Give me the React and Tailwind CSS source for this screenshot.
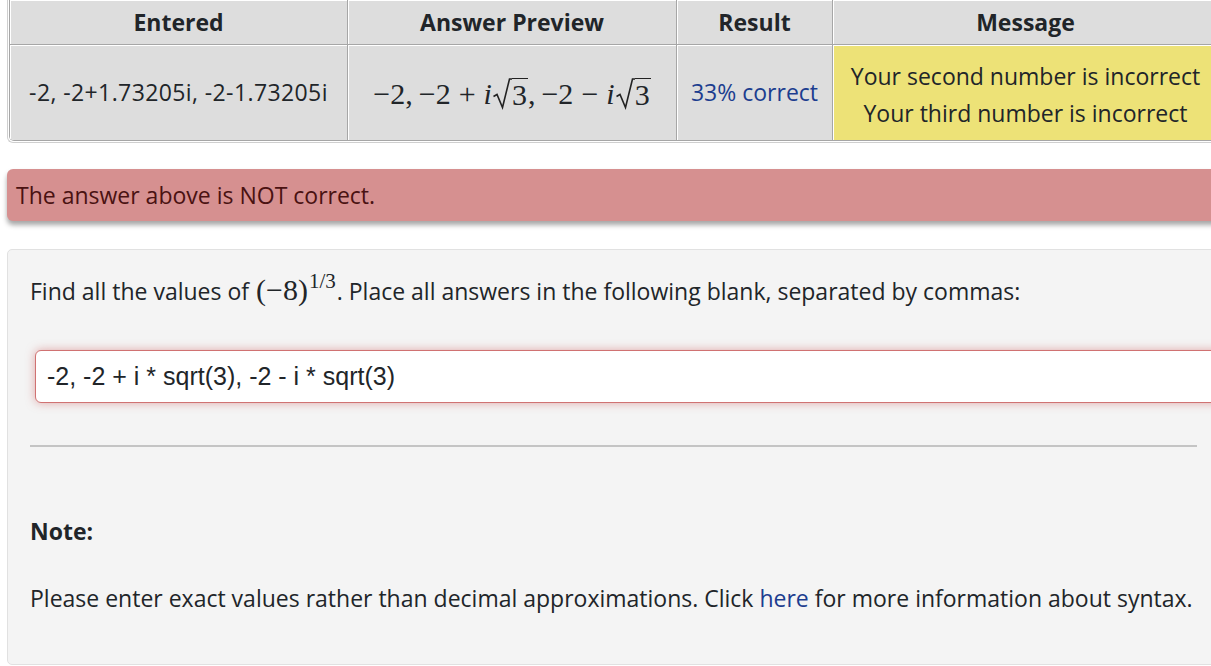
import React from "react";

const sans = { fontFamily: '"Open Sans", "Noto Sans", sans-serif' };
const mathFont = { fontFamily: '"Liberation Serif", "DejaVu Serif", serif' };

function Sqrt3() {
  return (
    <span className="inline-flex items-start">
      <svg width="20" height="32" viewBox="0 0 20 32">
        <path d="M1.5 18.5 L5 16.5 L10.5 29.5 L17.5 1 L20 1" fill="none" stroke="#222" strokeWidth="1.6" strokeLinejoin="miter" />
      </svg>
      <span className="border-t-[1.6px] border-[#222] leading-[29px] h-[32px] pt-[1px] pr-[1px]">3</span>
    </span>
  );
}

export default function App() {
  const cell = "border-l border-t border-[#a6a6a6] shadow-[inset_1px_1px_0_#ffffff] bg-[#dddddd] flex items-center justify-center";
  return (
    <div className="w-[1211px] h-[666px] overflow-hidden bg-white text-[#212529]" style={sans}>
      <div className="w-[1240px]">
        {/* table */}
        <div className="ml-[7px] w-[1211px] border-l border-b border-[#cfcfcf] rounded-bl-[6px] pl-[1px] pb-[1px] bg-white">
          <div className="border-b border-[#a6a6a6] rounded-bl-[5px] overflow-hidden">
            <div className="flex h-[44px] text-[23px] font-bold">
              <div className={`${cell} w-[338px] border-t-0`}>Entered</div>
              <div className={`${cell} w-[329px] border-t-0`}>Answer Preview</div>
              <div className={`${cell} w-[156px] border-t-0`}>Result</div>
              <div className={`${cell} flex-1 border-t-0`}>Message</div>
            </div>
            <div className="flex h-[96px] text-[23px]">
              <div className={`${cell} w-[338px] tracking-[0.4px]`}>-2, -2+1.73205i, -2-1.73205i</div>
              <div className={`${cell} w-[329px] text-[30px]`} style={mathFont}>
                <span className="flex items-center whitespace-nowrap leading-[32px] pt-[2px]">
                  <span>−2,</span>
                  <span className="inline-block w-[6px]" />
                  <span>−2</span>
                  <span className="inline-block mx-[8px]">+</span>
                  <span className="italic">i</span>
                  <Sqrt3 />
                  <span>,</span>
                  <span className="inline-block w-[6px]" />
                  <span>−2</span>
                  <span className="inline-block mx-[8px]">−</span>
                  <span className="italic">i</span>
                  <Sqrt3 />
                </span>
              </div>
              <div className={`${cell} w-[156px] text-[#1c3d8f]`}>33% correct</div>
              <div className={`${cell} flex-1 !bg-[#ede277] flex-col leading-[37px] pt-[4px]`}>
                <div>Your second number is incorrect</div>
                <div>Your third number is incorrect</div>
              </div>
            </div>
          </div>
        </div>

        {/* alert */}
        <div className="ml-[7px] mt-[26px] h-[52px] rounded-[6px] bg-[#d69090] text-[#4a1212] text-[23px] flex items-center pl-[9px] shadow-[0_4px_5px_rgba(0,0,0,0.35)]">
          The answer above is NOT correct.
        </div>

        {/* problem card */}
        <div className="ml-[7px] mt-[28px] w-[1213px] h-[416px] bg-[#f4f4f4] border border-[#e1e1e1] rounded-[5px] pl-[22px] pr-[22px]">
          <div className="mt-[23px] text-[23px] leading-[34px] flex items-baseline">
            <span>Find all the values of&nbsp;</span>
            <span className="text-[30px] ml-[1px]" style={mathFont}>(−8)</span>
            <span className="text-[21px] relative -top-[12px] ml-[1px] mr-[1px]" style={mathFont}>1/3</span>
            <span>. Place all answers in the following blank, separated by commas:</span>
          </div>
          <div className="mt-[40px] ml-[5px] w-[1240px] h-[53px] bg-white border border-[#d07272] rounded-[6px] shadow-[0_0_10px_rgba(205,90,90,0.5)] flex items-center pl-[11px] text-[25px]" style={{ fontFamily: '"Liberation Sans", Arial, sans-serif' }}>
            -2, -2 + i * sqrt(3), -2 - i * sqrt(3)
          </div>
          <div className="mt-[42px] h-[2px] bg-[#c4c4c4]" />
          <div className="mt-[67px] text-[23px] font-bold leading-[34px]">Note:</div>
          <div className="mt-[33px] text-[23px] leading-[34px] whitespace-nowrap">
            Please enter exact values rather than decimal approximations. Click{" "}
            <span className="text-[#1c3d8f]">here</span> for more information about syntax.
          </div>
        </div>
      </div>
    </div>
  );
}
